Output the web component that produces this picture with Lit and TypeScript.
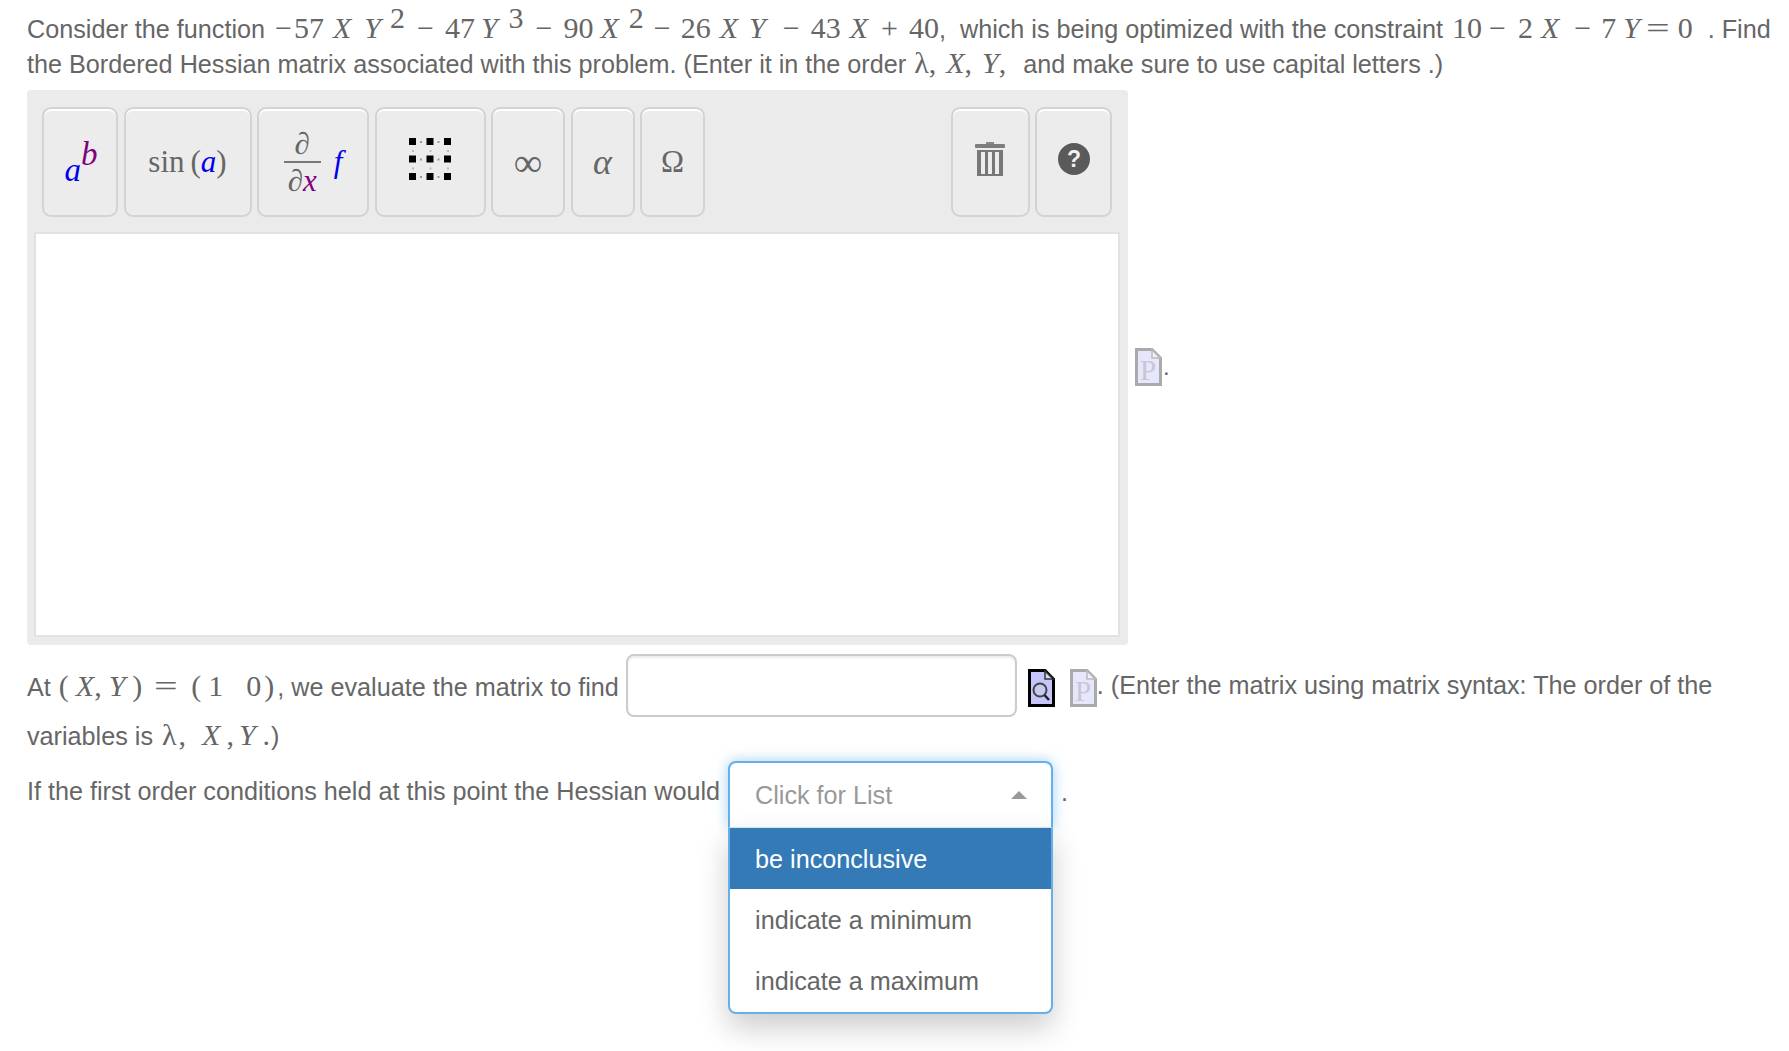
import { LitElement, html, css, svg } from 'lit';
import { customElement } from 'lit/decorators.js';

// one math token: text, gap before it in px, extra classes
const t = (text: string, gap = 0, cls = '') => html`<span class="m g${gap} ${cls}">${text}</span>`;
const v = (text: string, gap = 0) => t(text, gap, 'i');
const sup = (text: string, gap = 0) => t(text, gap, 'sup');

const pageIcon = (lens: boolean) => svg`
  <svg class="file" viewBox="0 0 27 38" width="27" height="38">
    <path d="M1.5 1.5H17L25.5 10V36.5H1.5Z" fill=${lens ? '#c5c5fb' : '#e6e7fd'} stroke=${lens ? '#000' : '#aaa'} stroke-width="3"/>
    <path d="M17 2V10H25Z" fill=${lens ? '#d8d8ee' : '#f2f2fb'} stroke=${lens ? '#333' : '#bbb'} stroke-width="1.5"/>
    ${lens
      ? svg`<circle cx="12" cy="21" r="6.5" fill="#c8c8f0" stroke="#444" stroke-width="2"/>
            <path d="M16.5 26L21 31" stroke="#222" stroke-width="2.6"/>`
      : svg`<text x="13" y="32" text-anchor="middle" font-family="Liberation Serif" font-size="29" fill="#c8c8d2">P</text>`}
  </svg>`;

@customElement('app-root')
export class AppRoot extends LitElement {
  static styles = css`
    :host {
      display: block;
      height: 1051px;
      overflow: hidden;
      background: #fff;
      color: #666;
      font-family: 'Liberation Sans', Arial, sans-serif;
      font-size: 25.2px;
    }
    .page { padding: 9px 0 0 27px; white-space: nowrap; }
    .line { display: flex; align-items: baseline; height: 37px; line-height: 37px; }
    .line.first { height: 35px; }
    .m { font-family: 'Liberation Serif', serif; font-size: 30px; }
    .i { font-style: italic; }
    .sup { transform: translateY(-10px); }
    .wide { transform: scaleX(1.4); transform-origin: left; }
    .g0 { margin-left: 0; }
    .g1 { margin-left: 1px; }
    .g2 { margin-left: 2px; }
    .g3 { margin-left: 3px; }
    .g4 { margin-left: 4px; }
    .g5 { margin-left: 5px; }
    .g6 { margin-left: 6px; }
    .g7 { margin-left: 7px; }
    .g8 { margin-left: 8px; }
    .g9 { margin-left: 9px; }
    .g10 { margin-left: 10px; }
    .g11 { margin-left: 11px; }
    .g12 { margin-left: 12px; }
    .g13 { margin-left: 13px; }
    .g14 { margin-left: 14px; }
    .g15 { margin-left: 15px; }
    .g16 { margin-left: 16px; }
    .g17 { margin-left: 17px; }
    .g20 { margin-left: 20px; }
    .g23 { margin-left: 23px; }

    .editor-row { display: flex; align-items: flex-start; margin-top: 9px; }
    .panel {
      width: 1101px;
      height: 555px;
      box-sizing: border-box;
      background: #ebebeb;
      border-radius: 4px;
      padding: 17px 8px 8px 7px;
      display: flex;
      flex-direction: column;
      gap: 15px;
    }
    .toolbar { display: flex; gap: 5.5px; height: 110px; padding: 0 8px; }
    .btn {
      box-sizing: border-box;
      height: 110px;
      border: 2px solid #d3d3d3;
      border-radius: 9px;
      box-shadow: inset 0 2px 0 #fff;
      background: #ececec;
      display: flex;
      align-items: center;
      justify-content: center;
      font-family: 'Liberation Serif', serif;
      font-size: 31px;
    }
    .w76 { width: 76px; }
    .w128 { width: 128px; }
    .w112 { width: 112px; }
    .w111 { width: 111px; }
    .w74 { width: 74px; }
    .w64 { width: 64px; }
    .w65 { width: 65px; }
    .w79 { width: 79px; }
    .w77 { width: 77px; }
    .spacer { flex: 1; }
    .blue { color: #0000ee; }
    .purple { color: #800080; }
    .lo { font-size: 33px; transform: translate(2px, 8px); }
    .hi { font-size: 33px; transform: translateY(-8px); margin-left: 2px; }
    .frac { display: flex; flex-direction: column; align-items: center; width: 37px; line-height: 33px; }
    .frac hr { width: 100%; height: 2px; margin: 1px 0; border: 0; background: #777; }
    .fn { margin-left: 13px; }
    .inf { font-size: 40px; }
    .alpha { font-size: 36px; font-style: italic; }
    .up { margin-bottom: 6px; }
    .editor { flex: 1; background: #fff; border: 2px solid #e2e2e2; }
    .beside { display: flex; align-items: center; margin: 258px 0 0 7px; font-size: 24px; }
    .file { display: block; flex: none; }

    .row2 { display: flex; align-items: center; margin-top: 9px; height: 63px; }
    .field {
      width: 391px;
      height: 63px;
      box-sizing: border-box;
      margin-left: 7px;
      background: #fff;
      border: 2px solid #ccc;
      border-radius: 8px;
      box-shadow: inset 0 2px 2px rgba(0, 0, 0, 0.075);
    }
    .inl { display: flex; align-items: baseline; }
    .ic1 { margin: 5px 0 0 11px; }
    .ic2 { margin: 5px 0 0 15px; }
    .row3 { margin-top: -1px; }
    .row4 { display: flex; align-items: flex-start; margin-top: 8px; }
    .row4 > span { line-height: 60px; }
    .select { position: relative; width: 325px; margin-left: 8px; }
    .head {
      box-sizing: border-box;
      height: 66px;
      padding-left: 25px;
      display: flex;
      align-items: center;
      justify-content: space-between;
      border: 2px solid #66afe9;
      border-bottom: 0;
      border-radius: 8px 8px 0 0;
      color: #999;
      background: #fff;
      box-shadow: 0 0 14px rgba(102, 175, 233, 0.6);
    }
    .caret {
      width: 0;
      height: 0;
      margin-right: 24px;
      border: 8px solid transparent;
      border-top: 0;
      border-bottom: 8px solid #999;
    }
    .list {
      position: absolute;
      left: 0;
      right: 0;
      top: 66px;
      box-sizing: border-box;
      padding-bottom: 1px;
      background: #fff;
      border: 2px solid #66afe9;
      border-top: 1px solid #cfe3f5;
      border-radius: 0 0 8px 8px;
      box-shadow: 0 14px 30px rgba(0, 0, 0, 0.2);
    }
    .opt { height: 61px; line-height: 63px; padding-left: 25px; }
    .opt.on { background: #337ab7; color: #fff; }
    .row4 > .dot { margin-left: 8px; line-height: 62px; }
  `;

  private matrixIcon() {
    const at = [0, 1, 2];
    return svg`<svg class="up" viewBox="0 0 42 42" width="42" height="42">
      ${at.map(r => at.map(c => svg`
        <rect x=${c * 17.5} y=${r * 17.5} width="7" height="7" fill="#000"/>
        ${c < 2 ? svg`<rect x=${11 + c * 17.5} y=${3 + r * 17.5} width="2" height="2" fill="#999"/>` : ''}
        ${r < 2 ? svg`<rect x=${3 + c * 17.5} y=${12 + r * 17.5} width="2" height="2" fill="#bbb"/>` : ''}
      `))}
    </svg>`;
  }

  private trashIcon() {
    return svg`<svg class="up" viewBox="0 0 30 34" width="30" height="34">
      <path d="M11 0H19V2H11Z" fill="#888"/>
      <rect x="0" y="2" width="30" height="4" rx="1" fill="#7d7d7d"/>
      <path d="M2 8H28V34H2ZM6 10V32H10V10ZM13 10V32H17V10ZM20 10V32H24V10Z" fill-rule="evenodd" fill="#777"/>
    </svg>`;
  }

  private helpIcon() {
    return svg`<svg class="up" viewBox="0 0 32 32" width="32" height="32">
      <circle cx="16" cy="16" r="16" fill="#5a5a5a"/>
      <text x="16" y="24" text-anchor="middle" font-family="Liberation Sans" font-weight="700" font-size="23" fill="#f0f0f0">?</text>
    </svg>`;
  }

  render() {
    return html`
      <div class="page">
        <div class="line first">
          <span>Consider the function</span>
          ${t('−', 10)}${t('57', 2)}${v('X', 9)}${v('Y', 13)}${sup('2', 9)}${t('−', 12)}${t('47', 11)}
          ${v('Y', 6)}${sup('3', 11)}${t('−', 12)}${t('90', 11)}${v('X', 7)}${sup('2', 10)}${t('−', 10)}
          ${t('26', 10)}${v('X', 9)}${v('Y', 11)}${t('−', 17)}${t('43', 11)}${v('X', 9)}${t('+', 13)}${t('40', 11)}<span>,</span>
          <span class="g14">which is being optimized with the constraint</span>
          ${t('10', 9)}${t('−', 7)}${t('2', 12)}${v('X', 8)}${t('−', 15)}${t('7', 10)}${v('Y', 7)}${t('=', 6, 'wide')}${t('0', 15)}
          <span class="g15">. Find</span>
        </div>
        <div class="line">
          <span>the Bordered Hessian matrix associated with this problem. (Enter it in the order</span>
          ${t('λ', 8)}${t(',', 0)}${v('X', 10)}${t(',', 0)}${v('Y', 10)}${t(',', 0)}
          <span class="g17">and make sure to use capital letters .)</span>
        </div>

        <div class="editor-row">
          <div class="panel">
            <div class="toolbar">
              <div class="btn w76"><span class="blue i lo">a</span><span class="purple i hi">b</span></div>
              <div class="btn w128">sin<span class="g6">(</span><span class="blue i">a</span>)</div>
              <div class="btn w112">
                <div class="frac">
                  <span class="i">∂</span>
                  <hr />
                  <span class="i">∂<span class="purple">x</span></span>
                </div>
                <span class="blue i fn">f</span>
              </div>
              <div class="btn w111">${this.matrixIcon()}</div>
              <div class="btn w74"><span class="inf">∞</span></div>
              <div class="btn w64"><span class="alpha">α</span></div>
              <div class="btn w65">Ω</div>
              <div class="spacer"></div>
              <div class="btn w79">${this.trashIcon()}</div>
              <div class="btn w77">${this.helpIcon()}</div>
            </div>
            <div class="editor"></div>
          </div>
          <div class="beside">${pageIcon(false)}<span class="g1">.</span></div>
        </div>

        <div class="row2">
          <div class="inl">
            <span>At</span>
            ${t('(', 8)}${v('X', 7)}${t(',', 0)}${v('Y', 7)}${t(')', 7)}${t('=', 12, 'wide')}
            ${t('(', 20)}${t('1', 7)}${t('0', 23)}${t(')', 3)}<span class="g3">, we evaluate the matrix to find</span>
          </div>
          <div class="field"></div>
          <div class="ic1">${pageIcon(true)}</div>
          <div class="ic2">${pageIcon(false)}</div>
          <span class="g0">. (Enter the matrix using matrix syntax: The order of the</span>
        </div>

        <div class="line row3">
          <span>variables is</span>
          ${t('λ', 9)}${t(',', 2)}${v('X', 16)}${t(',', 6)}${v('Y', 5)}${t('.', 7)}<span class="g1">)</span>
        </div>

        <div class="row4">
          <span>If the first order conditions held at this point the Hessian would</span>
          <div class="select">
            <div class="head">Click for List<i class="caret"></i></div>
            <div class="list">
              <div class="opt on">be inconclusive</div>
              <div class="opt">indicate a minimum</div>
              <div class="opt">indicate a maximum</div>
            </div>
          </div>
          <span class="dot">.</span>
        </div>
      </div>
    `;
  }
}
